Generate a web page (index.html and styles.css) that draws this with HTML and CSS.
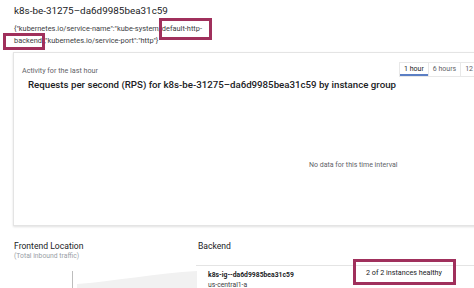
FILE: index.html
```html
<!DOCTYPE html>
<html lang="en">
<head>
    <meta charset="UTF-8">
    <meta name="viewport" content="width=device-width, initial-scale=1.0">
    <title>k8s-be-31275--da6d9985bea31c59</title>
    <link rel="stylesheet" href="styles.css">
</head>
<body>
    <div class="page">
        <h1 class="title">k8s-be-31275–da6d9985bea31c59</h1>
        <p class="labels">
            {"kubernetes.io/service-name":"kube-system/<span class="mark mark-first">default-http-</span><br>
            <span class="mark mark-second">backend</span>","kubernetes.io/service-port":"http"}
        </p>

        <!-- Activity chart -->
        <div class="card">
            <div class="card-head">
                <span class="activity">Activity for the last hour</span>
                <div class="ranges">
                    <button class="range active">1 hour</button>
                    <button class="range">6 hours</button>
                    <button class="range">12 hours</button>
                    <button class="range">1 day</button>
                </div>
            </div>
            <h2 class="chart-title">Requests per second (RPS) for k8s-be-31275–da6d9985bea31c59 by instance group</h2>
            <div class="chart">
                <span class="no-data">No data for this time interval</span>
            </div>
        </div>

        <!-- Traffic -->
        <div class="traffic">
            <div class="frontend">
                <h3 class="col-title">Frontend Location</h3>
                <div class="col-sub">(Total inbound traffic)</div>
                <div class="flow">
                    <div class="flow-bar"></div>
                    <svg class="flow-band" width="120" height="22" viewBox="0 0 120 22">
                        <path d="M0 15 C40 12 80 4 120 2 L120 22 L0 22 Z" fill="#f1f1f1"/>
                    </svg>
                </div>
            </div>
            <div class="backend">
                <h3 class="col-title">Backend</h3>
                <div class="backend-row">
                    <div class="backend-name">
                        <strong>k8s-ig--da6d9985bea31c59</strong>
                        <span>us-central1-a</span>
                    </div>
                    <div class="health"><span class="mark mark-third">2 of 2 instances healthy</span></div>
                </div>
            </div>
        </div>
    </div>
</body>
</html>
```

FILE: styles.css
```css
body {
    margin: 0;
    overflow: hidden;
    font-family: Roboto, "Liberation Sans", sans-serif;
    color: #202124;
    background: #fff;
}
.page {
    padding: 0 0 0 14px;
}
.title {
    margin: 0;
    padding-top: 4px;
    font-size: 9.9px;
    font-weight: 400;
    line-height: 14px;
}
.labels {
    margin: 5px 0 0;
    font-size: 7.4px;
    line-height: 12px;
    color: #3c4043;
}
.mark {
    position: relative;
}
.mark::after {
    content: "";
    position: absolute;
    border: 3px solid #a0305c;
}
.mark-first::after {
    top: -6px;
    bottom: -7px;
    left: -3px;
    right: -10px;
}
.mark-second::after {
    top: -3px;
    bottom: -5px;
    left: -11px;
    right: -3px;
}
.mark-third::after {
    top: -9px;
    bottom: -8px;
    left: -13px;
    right: -14px;
}
.card {
    margin: 5px -60px 0 -1px;
    height: 174px;
    border: 1px solid #e4e4e4;
    box-shadow: 0 1px 2px rgba(0, 0, 0, 0.12);
    padding: 8px 0 0 8px;
    box-sizing: border-box;
}
.card-head {
    display: flex;
    align-items: center;
    height: 16px;
}
.activity {
    flex: 1;
    font-size: 7.2px;
    color: #5f6368;
    padding-top: 3px;
}
.ranges {
    display: flex;
    width: 134px;
}
.range {
    font-family: inherit;
    font-size: 7px;
    color: #5f6368;
    background: #fff;
    border: 1px solid #e8e8e8;
    border-left: none;
    padding: 0 4px;
    height: 15px;
}
.range:first-child {
    border-left: 1px solid #e8e8e8;
}
.range.active {
    color: #202124;
    box-shadow: inset 0 -2px 0 #5b7fc4;
}
.chart-title {
    margin: 1px 0 0 6px;
    font-size: 9.7px;
    font-weight: 500;
    line-height: 14px;
}
.chart {
    height: 120px;
    display: flex;
    align-items: center;
    padding-left: 287px;
}
.no-data {
    font-size: 7px;
    color: #5f6368;
    margin-top: 26px;
}
.traffic {
    display: flex;
    margin-top: 14px;
}
.frontend {
    width: 184px;
}
.col-title {
    margin: 0;
    font-size: 8.6px;
    font-weight: 400;
    line-height: 12px;
}
.col-sub {
    font-size: 6.8px;
    color: #9aa0a6;
    line-height: 9px;
}
.flow {
    display: flex;
    align-items: flex-end;
    margin: 6px 0 0 58px;
    height: 24px;
}
.flow-bar {
    width: 1px;
    height: 20px;
    background: #bdbdbd;
    margin-right: 4px;
}
.backend {
    flex: 1;
}
.backend .col-title {
    margin-bottom: 13px;
}
.backend-row {
    display: flex;
    border-top: 1px solid #e4e4e4;
    margin-left: -2px;
    padding: 4px 0 0 12px;
}
.backend-name {
    width: 158px;
    display: flex;
    flex-direction: column;
    font-size: 6.8px;
    line-height: 10px;
    color: #3c4043;
}
.backend-name strong {
    color: #202124;
    font-weight: 700;
}
.health {
    font-size: 7.2px;
    line-height: 10px;
    margin-top: -2px;
    color: #202124;
}
```
